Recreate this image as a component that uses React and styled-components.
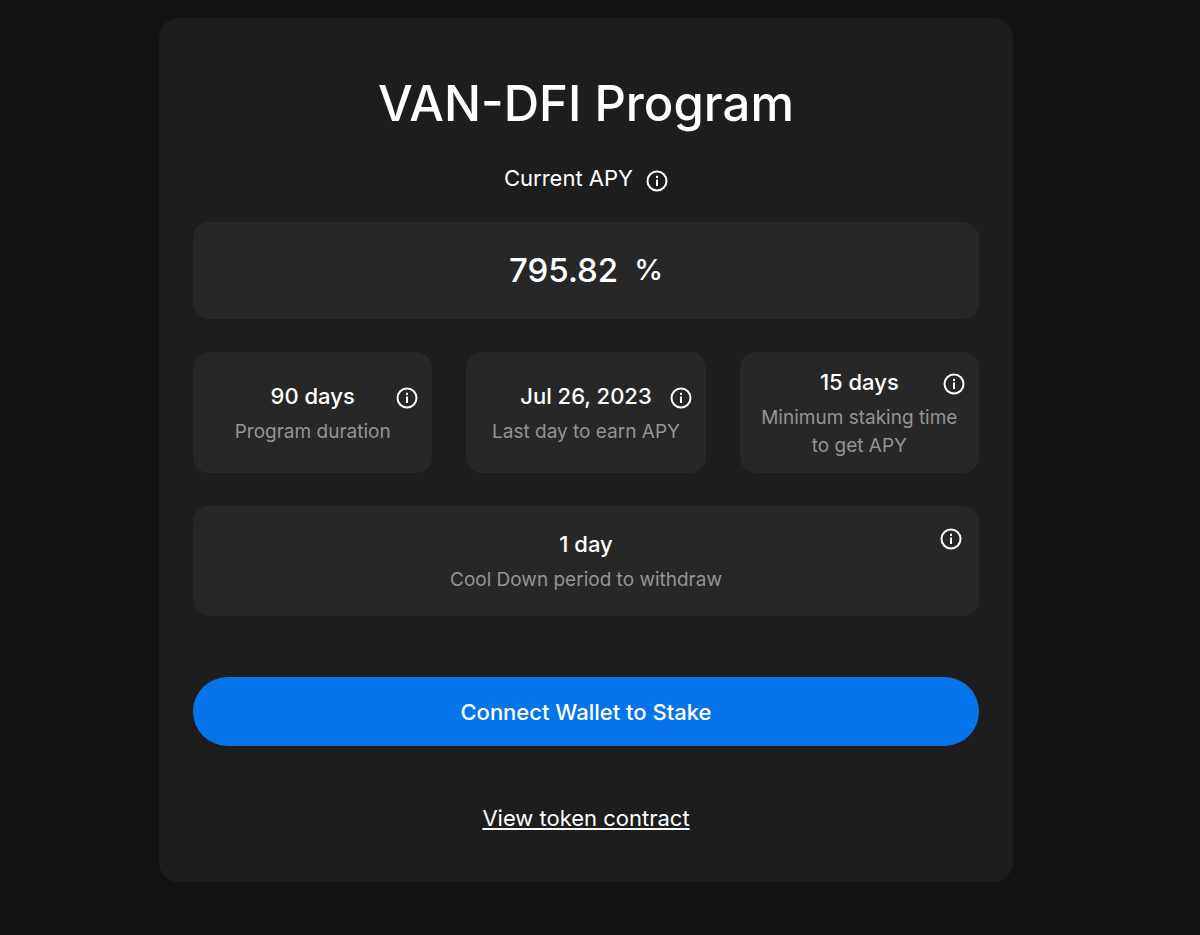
import styled, { createGlobalStyle } from 'styled-components';

const GlobalStyle = createGlobalStyle`
    * {
        box-sizing: border-box;
    }

    body {
        margin: 0;
        background: #131313;
        color: #ffffff;
        font-family: Inter, sans-serif;
    }
`

const Page = styled.main`
    display: flex;
    justify-content: center;
    padding: 18px 187px 52px 159px;

    @media only screen and (max-width: 900px) {
        padding: 18px;
    }
`

const Card = styled.section`
    display: flex;
    flex-direction: column;
    flex: 1;
    max-width: 960px;
    padding: 52px 34px 48px;
    border-radius: 20px;
    background: #1d1d1d;
`

const Title = styled.h1`
    margin: 0;
    font-size: 49px;
    line-height: 68px;
    font-weight: 500;
    text-align: center;
`

const InfoButton = styled.button`
    display: flex;
    padding: 0;
    border: 0;
    background: none;
    color: #ffffff;
    cursor: pointer;
`

const ApyLabel = styled.div`
    display: flex;
    justify-content: center;
    align-items: center;
    gap: 13px;
    margin: 24px 0 28px;
    font-size: 22px;
    line-height: 32px;

    ${InfoButton} {
        padding-top: 6px;
    }
`

const Box = styled.div`
    position: relative;
    display: flex;
    flex-direction: column;
    justify-content: center;
    min-height: ${props => props.$height};
    padding: 14px 16px 12px;
    border-radius: 16px;
    background: #272727;
    text-align: center;
`

const Apy = styled.div`
    display: flex;
    justify-content: center;
    align-items: center;
    gap: 16px;
    padding-bottom: 4px;
    font-size: 33px;
    line-height: 44px;
    font-weight: 500;
`

const Percent = styled.span`
    font-size: 29px;
`

const Stats = styled.div`
    display: grid;
    grid-template-columns: repeat(3, 1fr);
    gap: 34px;
    margin: 33px 0;

    @media only screen and (max-width: 800px) {
        grid-template-columns: 1fr;
    }
`

const Value = styled.div`
    margin-bottom: 8px;
    font-size: 22px;
    line-height: 28px;
    font-weight: 500;
`

const Caption = styled.div`
    color: #949494;
    font-size: 19px;
    line-height: 28px;
`

const Corner = styled.div`
    position: absolute;
    top: ${props => props.$top};
    right: ${props => props.$right};
`

const ConnectButton = styled.button`
    margin-top: 61px;
    height: 69px;
    border: 0;
    border-radius: 35px;
    background: #0775e9;
    color: #ffffff;
    font-family: inherit;
    font-size: 22px;
    font-weight: 500;
    cursor: pointer;
`

const ContractLink = styled.a`
    align-self: center;
    margin-top: 56px;
    color: #ffffff;
    font-size: 22px;
    line-height: 32px;
    text-underline-offset: 2px;
`

const Info = ({ label }) => (
    <InfoButton type="button" aria-label={label}>
        <svg width="22" height="22" viewBox="0 0 22 22" fill="none" stroke="currentColor" strokeWidth="2">
            <circle cx="11" cy="11" r="9.5" />
            <path d="M11 9.5v6.5M11 5.8v2.2" />
        </svg>
    </InfoButton>
)

const Stat = ({ value, caption, height, top, right }) => (
    <Box $height={height}>
        <Value>{value}</Value>
        <Caption>{caption}</Caption>
        <Corner $top={top} $right={right}>
            <Info label={`About ${value}`} />
        </Corner>
    </Box>
)

const App = () => {
    return (
        <>
            <GlobalStyle />
            <Page>
                <Card>
                    <Title>VAN-DFI Program</Title>
                    <ApyLabel>
                        Current APY
                        <Info label="About current APY" />
                    </ApyLabel>
                    <Box $height="97px">
                        <Apy><span>795.82</span><Percent>%</Percent></Apy>
                    </Box>
                    <Stats>
                        <Stat value="90 days" caption="Program duration" height="121px" top="35px" right="14px" />
                        <Stat value="Jul 26, 2023" caption="Last day to earn APY" height="121px" top="35px" right="14px" />
                        <Stat value="15 days" caption="Minimum staking time to get APY" height="121px" top="21px" right="14px" />
                    </Stats>
                    <Stat value="1 day" caption="Cool Down period to withdraw" height="110px" top="22px" right="17px" />
                    <ConnectButton type="button">Connect Wallet to Stake</ConnectButton>
                    <ContractLink href="#contract">View token contract</ContractLink>
                </Card>
            </Page>
        </>
    );
}
export default App;
